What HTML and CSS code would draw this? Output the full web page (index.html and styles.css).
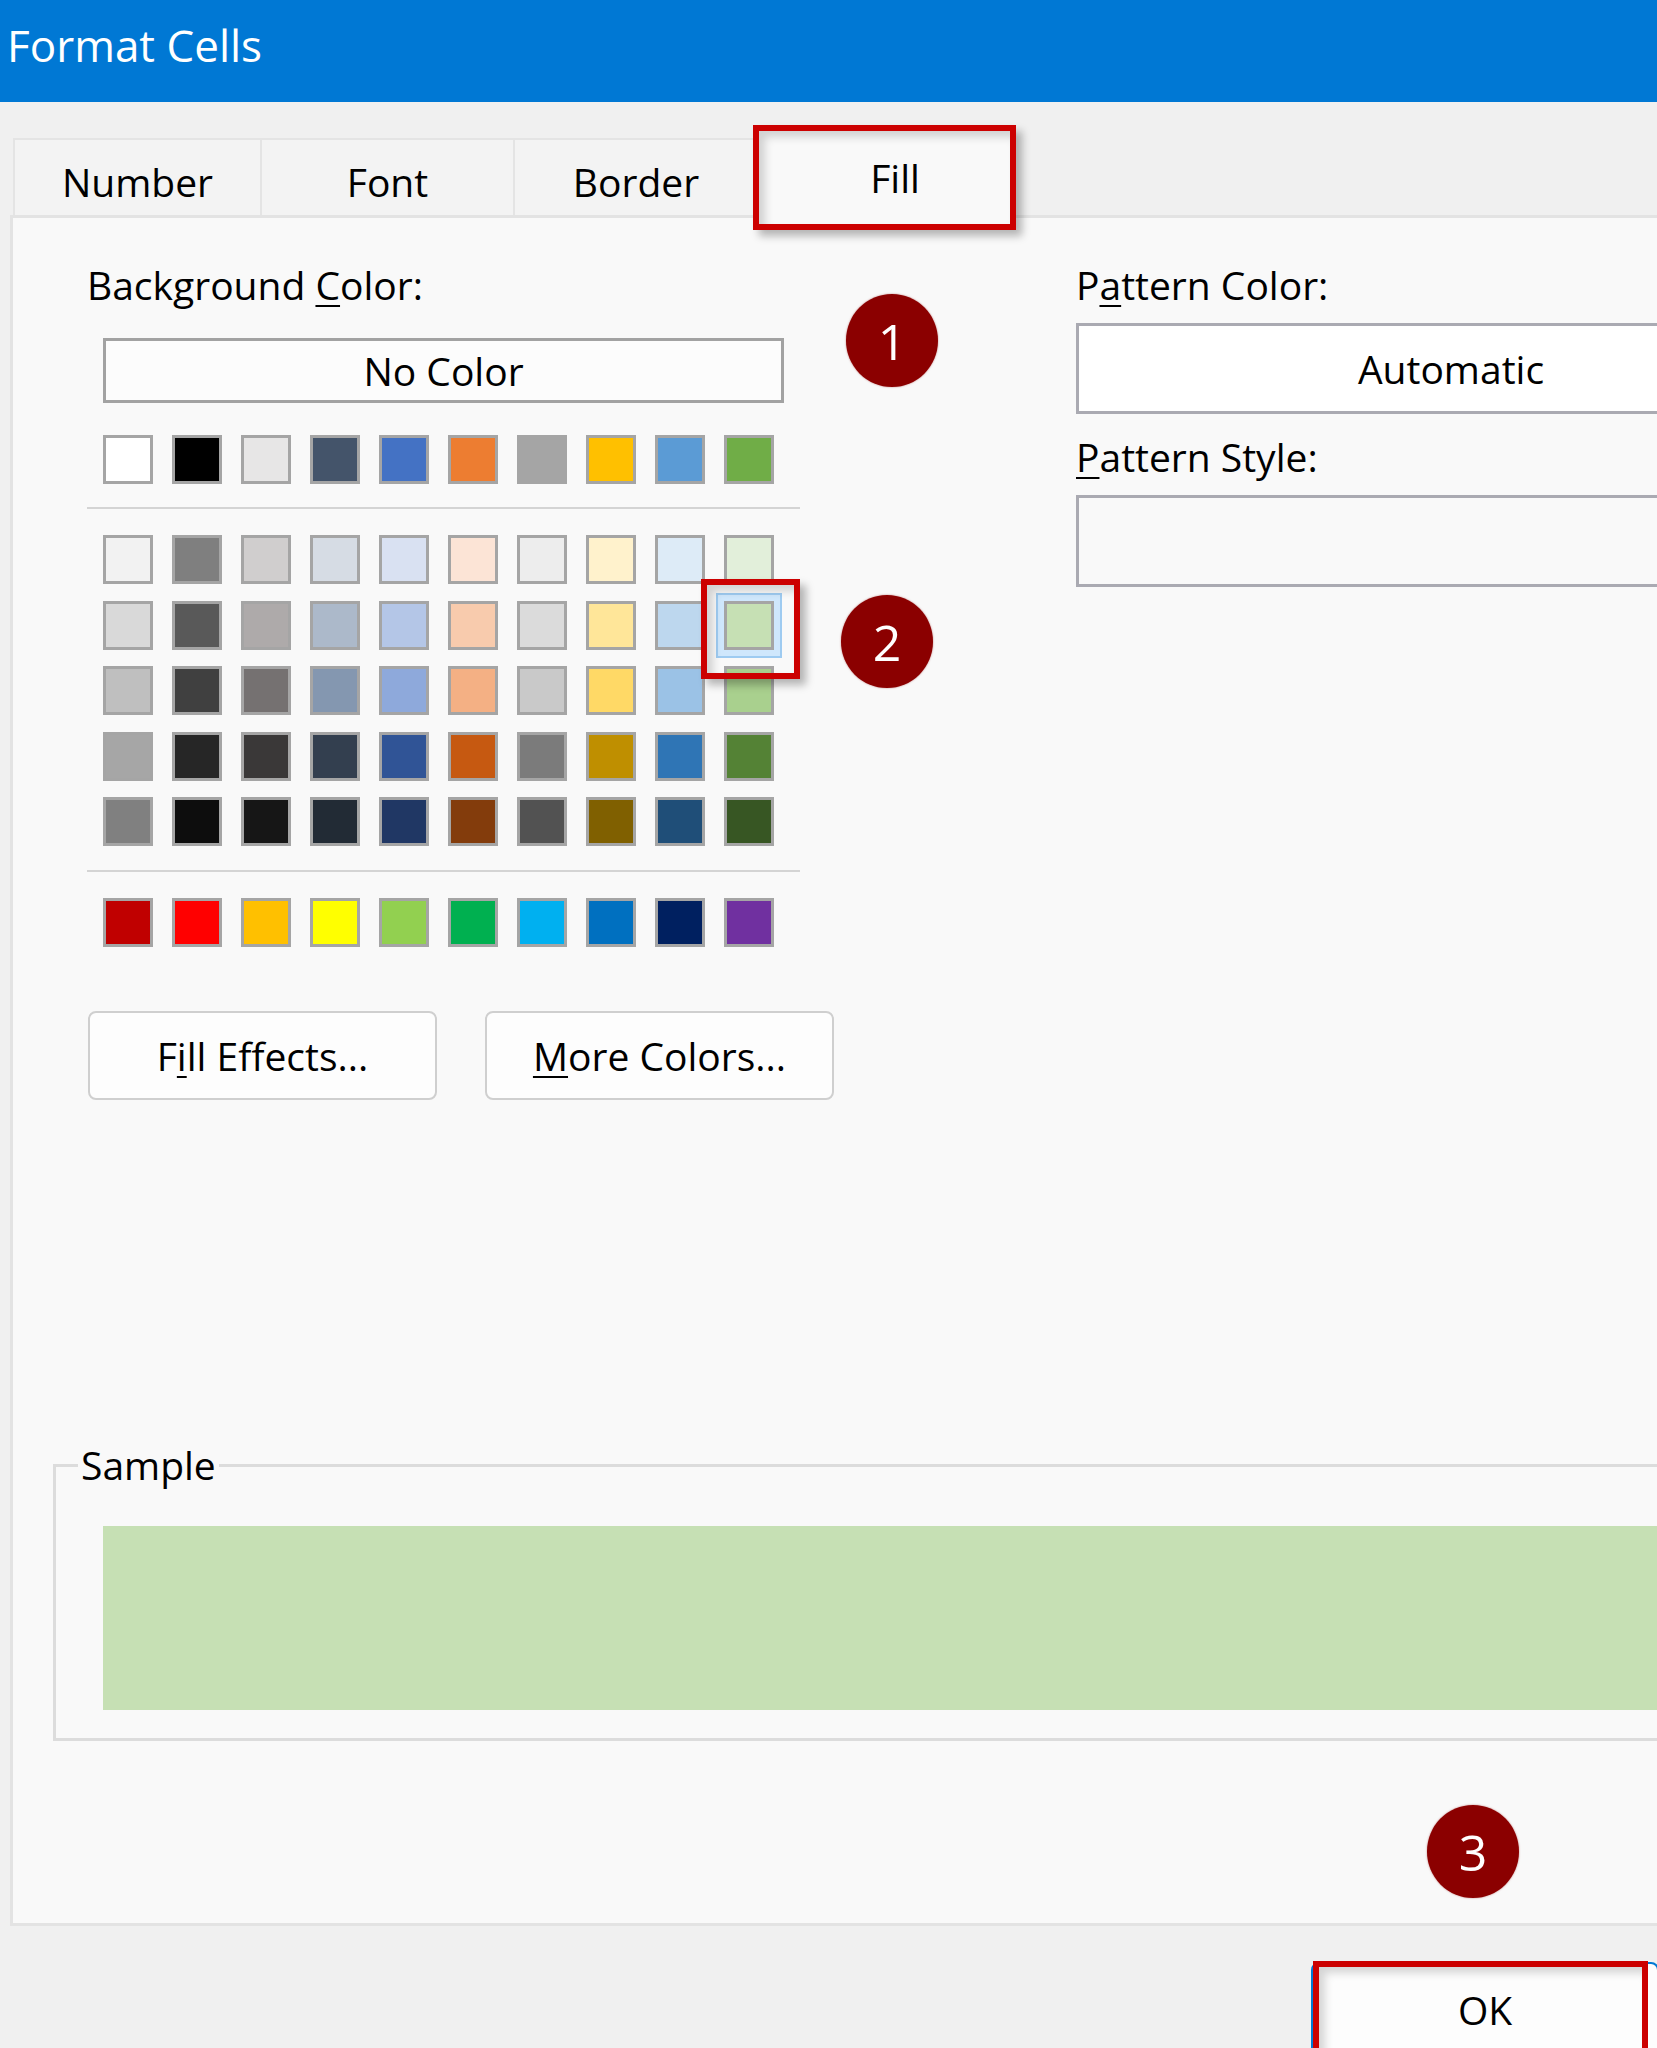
FILE: index.html
```html
<!DOCTYPE html>
<html lang="en">
<head>
  <meta charset="UTF-8">
  <title>Format Cells</title>
  <link rel="stylesheet" href="styles.css">
</head>
<body>
<div class="dialog">
  <div class="titlebar">Format Cells</div>

  <div class="tabs">
    <div class="tab tab-number">Number</div>
    <div class="tab tab-font">Font</div>
    <div class="tab tab-border">Border</div>
    <div class="tab-fill">Fill</div>
  </div>

  <div class="panel">
    <div class="columns">
      <div class="bg-col">
        <div class="label">Background <u>C</u>olor:</div>
        <div class="no-color">No Color</div>

        <div class="swatch-row top-row">
          <span class="swatch" style="background:#ffffff"></span>
          <span class="swatch" style="background:#000000"></span>
          <span class="swatch" style="background:#e7e6e6"></span>
          <span class="swatch" style="background:#44546a"></span>
          <span class="swatch" style="background:#4472c4"></span>
          <span class="swatch" style="background:#ed7d31"></span>
          <span class="swatch" style="background:#a5a5a5"></span>
          <span class="swatch" style="background:#ffc000"></span>
          <span class="swatch" style="background:#5b9bd5"></span>
          <span class="swatch" style="background:#70ad47"></span>
        </div>

        <div class="sep"></div>

        <div class="swatch-grid">
          <span class="swatch" style="background:#f2f2f2"></span>
          <span class="swatch" style="background:#7f7f7f"></span>
          <span class="swatch" style="background:#d0cece"></span>
          <span class="swatch" style="background:#d6dce4"></span>
          <span class="swatch" style="background:#d9e1f2"></span>
          <span class="swatch" style="background:#fce4d6"></span>
          <span class="swatch" style="background:#ededed"></span>
          <span class="swatch" style="background:#fff2cc"></span>
          <span class="swatch" style="background:#ddebf7"></span>
          <span class="swatch" style="background:#e2efda"></span>

          <span class="swatch" style="background:#d9d9d9"></span>
          <span class="swatch" style="background:#595959"></span>
          <span class="swatch" style="background:#aeaaaa"></span>
          <span class="swatch" style="background:#acb9ca"></span>
          <span class="swatch" style="background:#b4c6e7"></span>
          <span class="swatch" style="background:#f8cbad"></span>
          <span class="swatch" style="background:#dbdbdb"></span>
          <span class="swatch" style="background:#ffe699"></span>
          <span class="swatch" style="background:#bdd7ee"></span>
          <span class="swatch swatch-picked" style="background:#c6e0b4"></span>

          <span class="swatch" style="background:#bfbfbf"></span>
          <span class="swatch" style="background:#404040"></span>
          <span class="swatch" style="background:#757171"></span>
          <span class="swatch" style="background:#8497b0"></span>
          <span class="swatch" style="background:#8ea9db"></span>
          <span class="swatch" style="background:#f4b084"></span>
          <span class="swatch" style="background:#c9c9c9"></span>
          <span class="swatch" style="background:#ffd966"></span>
          <span class="swatch" style="background:#9bc2e6"></span>
          <span class="swatch" style="background:#a9d08e"></span>

          <span class="swatch" style="background:#a6a6a6"></span>
          <span class="swatch" style="background:#262626"></span>
          <span class="swatch" style="background:#3a3838"></span>
          <span class="swatch" style="background:#333f4f"></span>
          <span class="swatch" style="background:#305496"></span>
          <span class="swatch" style="background:#c65911"></span>
          <span class="swatch" style="background:#7b7b7b"></span>
          <span class="swatch" style="background:#bf8f00"></span>
          <span class="swatch" style="background:#2f75b5"></span>
          <span class="swatch" style="background:#548235"></span>

          <span class="swatch" style="background:#808080"></span>
          <span class="swatch" style="background:#0d0d0d"></span>
          <span class="swatch" style="background:#161616"></span>
          <span class="swatch" style="background:#222b35"></span>
          <span class="swatch" style="background:#203764"></span>
          <span class="swatch" style="background:#833c0c"></span>
          <span class="swatch" style="background:#525252"></span>
          <span class="swatch" style="background:#806000"></span>
          <span class="swatch" style="background:#1f4e78"></span>
          <span class="swatch" style="background:#375623"></span>
        </div>

        <div class="sep sep-low"></div>

        <div class="swatch-row std-row">
          <span class="swatch" style="background:#c00000"></span>
          <span class="swatch" style="background:#ff0000"></span>
          <span class="swatch" style="background:#ffc000"></span>
          <span class="swatch" style="background:#ffff00"></span>
          <span class="swatch" style="background:#92d050"></span>
          <span class="swatch" style="background:#00b050"></span>
          <span class="swatch" style="background:#00b0f0"></span>
          <span class="swatch" style="background:#0070c0"></span>
          <span class="swatch" style="background:#002060"></span>
          <span class="swatch" style="background:#7030a0"></span>
        </div>

        <div class="btn-row">
          <button class="btn">F<u>i</u>ll Effects...</button>
          <button class="btn"><u>M</u>ore Colors...</button>
        </div>
      </div>

      <div class="pattern-col">
        <div class="label">P<u>a</u>ttern Color:</div>
        <div class="select select-auto">Automatic</div>
        <div class="label label-style"><u>P</u>attern Style:</div>
        <div class="select select-style"></div>
      </div>
    </div>

    <fieldset class="sample">
      <legend>Sample</legend>
      <div class="sample-fill"></div>
    </fieldset>

    <span class="badge badge-1">1</span>
    <span class="badge badge-2">2</span>
    <span class="badge badge-3">3</span>
  </div>

  <div class="footer">
    <button class="btn btn-ok">OK</button>
  </div>
</div>
</body>
</html>
```

FILE: styles.css
```css
body { margin: 0; background: #f0f0f0; overflow: hidden; font-family: "Open Sans", "Noto Sans", sans-serif; }
.dialog { width: 1900px; height: 2048px; background: #f0f0f0; font-size: 39px; color: #000; }
u { text-decoration-thickness: 2px; text-underline-offset: 5px; }

.titlebar { height: 102px; box-sizing: border-box; padding: 15px 0 0 7px; background: #0078d4; color: #fff; font-size: 44px; line-height: 60px; }

/* tab strip */
.tabs { display: flex; align-items: flex-end; height: 113px; box-sizing: border-box; padding-left: 13px; }
.tab { box-sizing: border-box; height: 77px; padding-top: 16px; line-height: 52px; text-align: center; background: #f3f3f3; border: 2px solid #e4e4e4; border-bottom: 0; margin-right: -2px; }
.tab-number { width: 249px; }
.tab-font { width: 255px; }
.tab-border { width: 246px; }
.tab-fill { position: relative; z-index: 1; box-sizing: border-box; width: 256px; height: 87px; margin-bottom: -3px; padding: 21px 0 0 20px; line-height: 52px; text-align: center; background: #f9f9f9; }
.tab-fill::after { content: ""; position: absolute; left: -4px; top: -6px; width: 263px; height: 105px; box-sizing: border-box; border: 6px solid #cc0000; box-shadow: 6px 6px 8px rgba(0,0,0,.28), inset 6px 6px 8px rgba(0,0,0,.16); }

/* main panel */
.panel { position: relative; box-sizing: border-box; height: 1711px; margin-left: 10px; background: #f9f9f9; border: 3px solid #e3e3e3; }
.columns { display: grid; grid-template-columns: 989px 750px; padding: 41px 0 0 74px; }
.label { line-height: 52px; white-space: nowrap; }

.no-color { box-sizing: border-box; width: 681px; height: 65px; margin: 27px 0 0 16px; border: 3px solid #a2a2a2; background: #fcfcfc; display: flex; align-items: center; justify-content: center; line-height: 52px; }

.swatch-row { display: flex; gap: 19px; margin-left: 16px; }
.top-row { margin-top: 32px; }
.std-row { margin-top: 26px; }
.swatch { display: block; width: 50px; height: 49px; box-sizing: border-box; border: 3px solid #a5a5a5; }
.swatch-grid { display: grid; grid-template-columns: repeat(10, 50px); column-gap: 19px; row-gap: 16.5px; margin: 26px 0 0 16px; }
.swatch-picked { position: relative; box-shadow: 0 0 0 6px #cfe7fc, 0 0 0 8px #9ecbf1; }
.swatch-picked::after { content: ""; position: absolute; left: -26px; top: -25px; width: 99px; height: 100px; box-sizing: border-box; border: 6px solid #cc0000; box-shadow: 6px 6px 8px rgba(0,0,0,.28), inset 6px 6px 8px rgba(0,0,0,.16); }

.sep { width: 713px; height: 2px; margin-top: 23px; background: #d4d4d4; }
.sep-low { margin-top: 24px; }

.btn-row { display: flex; gap: 48px; margin: 64px 0 0 1px; }
.btn { flex-shrink: 0; width: 349px; height: 89px; box-sizing: border-box; padding: 0; border: 2px solid #cfcfcf; border-radius: 8px; background: #fdfdfd; font: inherit; line-height: 52px; color: #000; }

.select { box-sizing: border-box; height: 91px; margin-top: 12px; border: 3px solid #aaaab2; display: flex; align-items: center; justify-content: center; line-height: 52px; }
.select-auto { background: #fff; }
.label-style { margin-top: 17px; }
.select-style { height: 92px; background: #f9f9f9; }

/* sample */
.sample { margin: 337px 0 0 40px; padding: 0 0 28px 0; border: 3px solid #dcdcdc; min-width: 0; }
.sample legend { margin-left: 22px; padding: 0 3px; line-height: 56px; }
.sample-fill { height: 184px; margin: 33px 0 0 47px; background: #c6e0b4; }

/* step badges */
.badge { position: absolute; width: 92px; height: 93px; border-radius: 50%; background: #8b0000; color: #fff; font-size: 50px; line-height: 1; display: flex; align-items: center; justify-content: center; box-shadow: 0 0 2px rgba(139,0,0,.5); }
.badge-1 { left: 833px; top: 76px; }
.badge-2 { left: 828px; top: 377px; }
.badge-3 { left: 1414px; top: 1587px; }

/* bottom buttons */
.footer { display: flex; padding: 36px 0 0 1311px; }
.btn-ok { position: relative; width: 348px; height: 96px; border-color: #0078d4; }
.btn-ok::after { content: ""; position: absolute; left: 0; top: -3px; width: 335px; height: 100px; box-sizing: border-box; border: 6px solid #cc0000; box-shadow: inset 6px 6px 8px rgba(0,0,0,.16); }
```
